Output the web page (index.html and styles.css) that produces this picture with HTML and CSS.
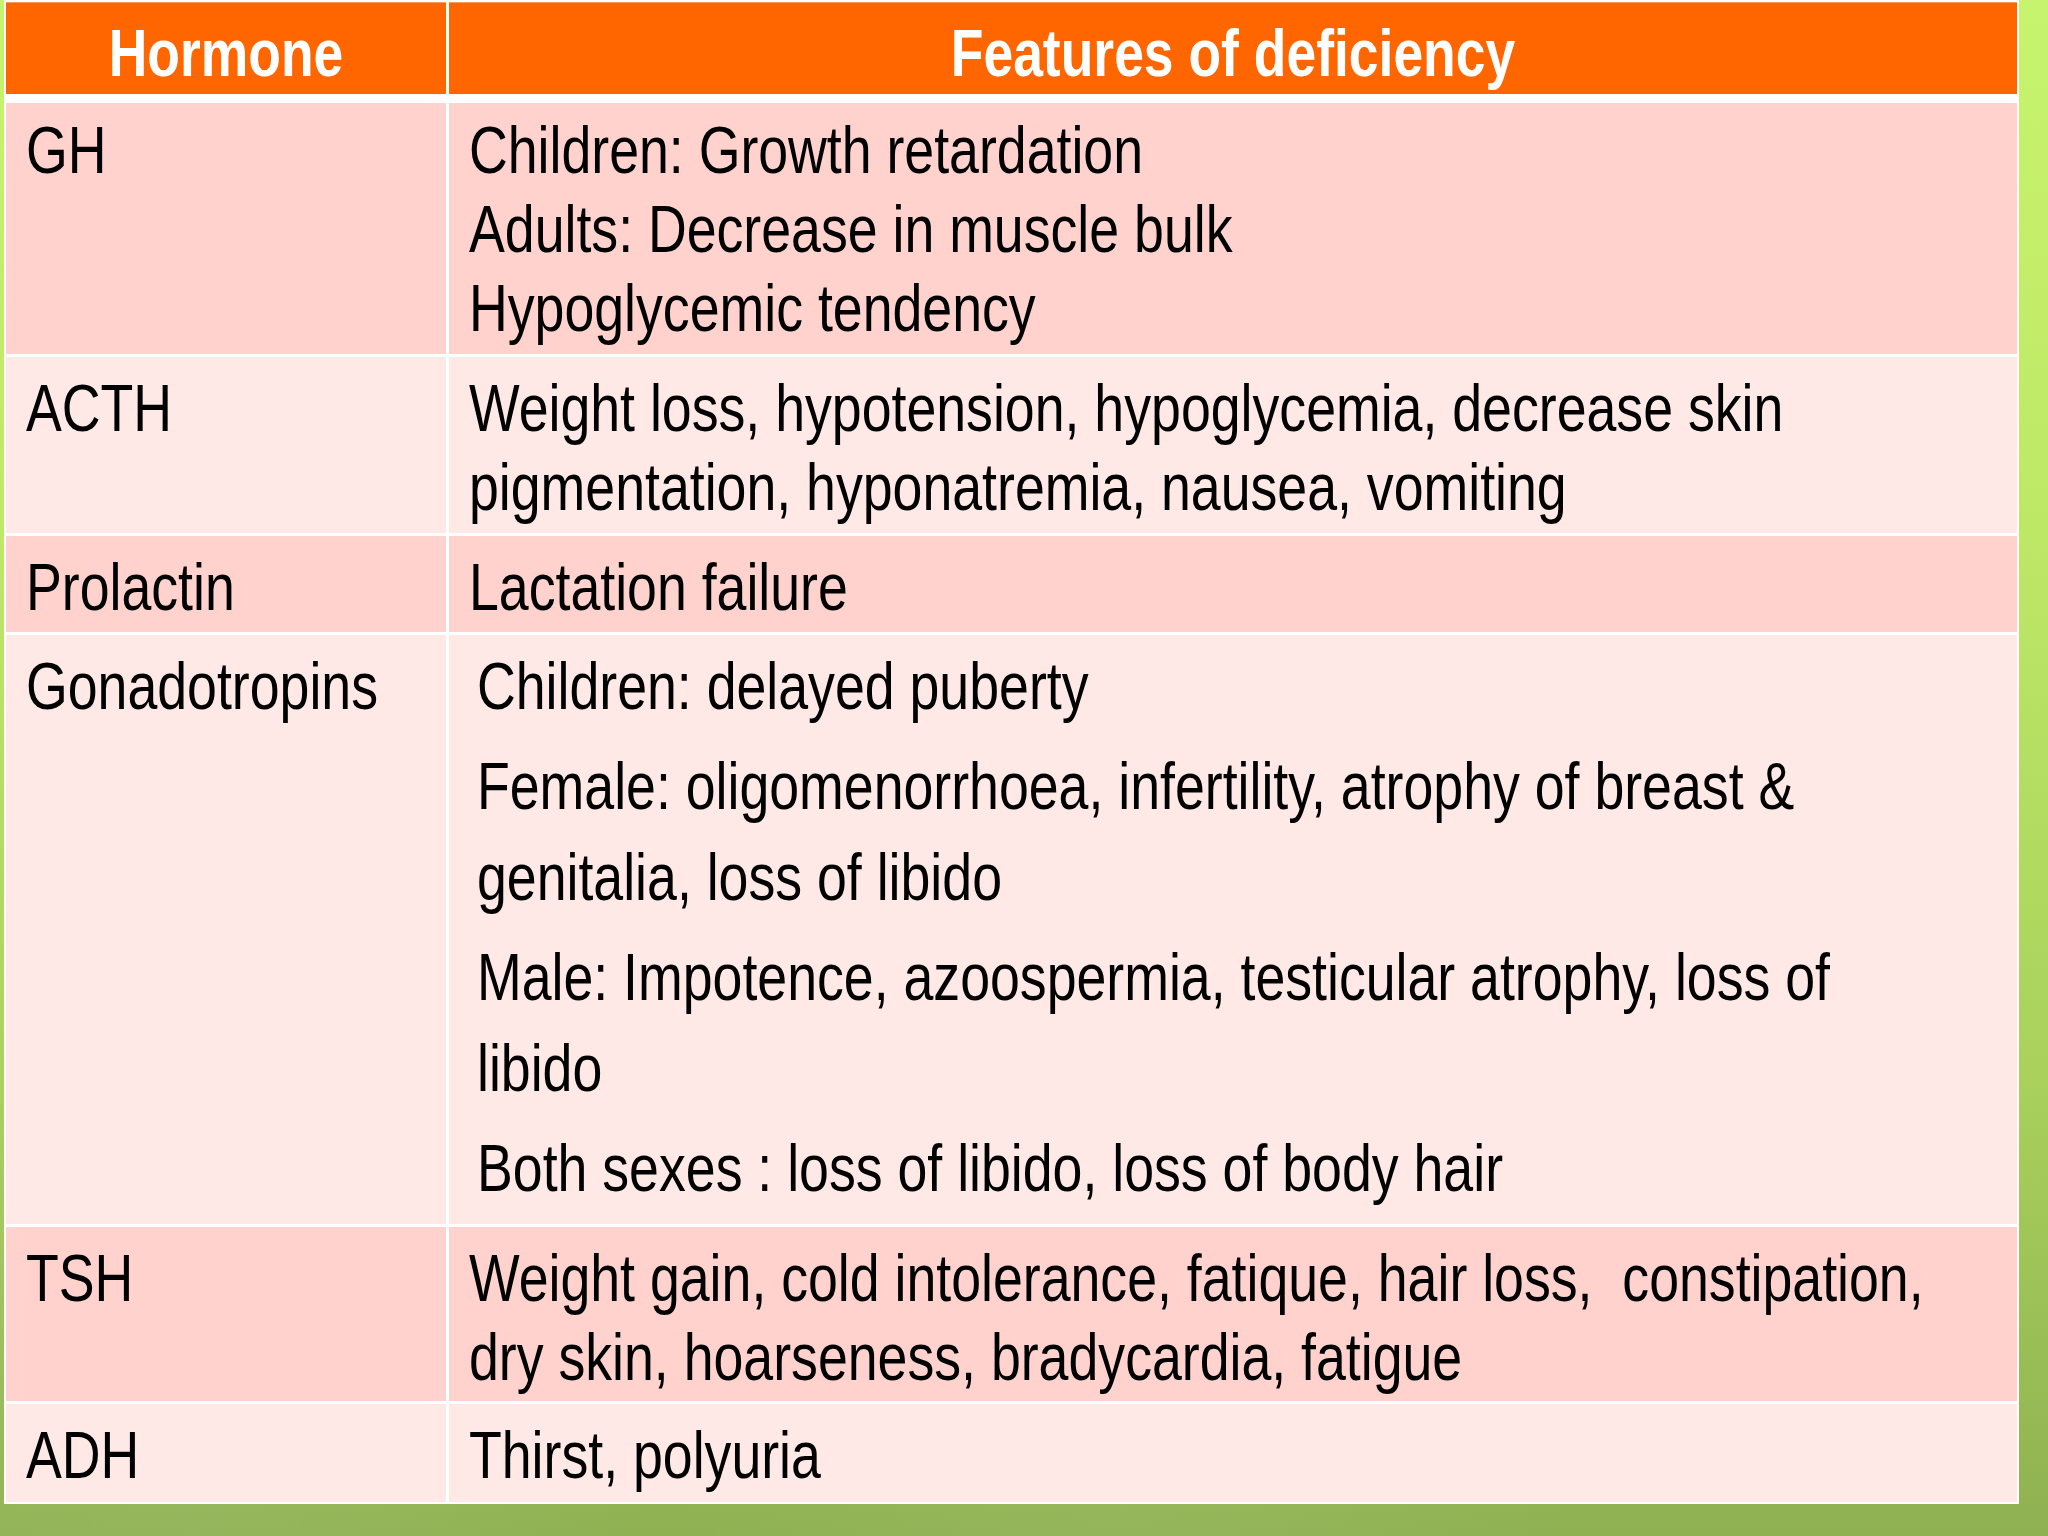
FILE: index.html
```html
<!DOCTYPE html>
<html lang="en">
<head>
<meta charset="utf-8">
<title>Hormone deficiency</title>
<link rel="stylesheet" href="styles.css">
</head>
<body>
<div class="slide">
  <div class="table">
    <div class="row head">
      <div class="cell"><div class="t">Hormone</div></div>
      <div class="cell"><div class="t">Features of deficiency</div></div>
    </div>
    <div class="row dark r-gh">
      <div class="cell"><div class="t">GH</div></div>
      <div class="cell"><div class="t">Children: Growth retardation<br>Adults: Decrease in muscle bulk<br>Hypoglycemic tendency</div></div>
    </div>
    <div class="row light r-acth">
      <div class="cell"><div class="t">ACTH</div></div>
      <div class="cell"><div class="t">Weight loss, hypotension, hypoglycemia, decrease skin<br>pigmentation, hyponatremia, nausea, vomiting</div></div>
    </div>
    <div class="row dark r-prl">
      <div class="cell"><div class="t">Prolactin</div></div>
      <div class="cell"><div class="t">Lactation failure</div></div>
    </div>
    <div class="row light r-gn">
      <div class="cell"><div class="t">Gonadotropins</div></div>
      <div class="cell paras">
        <div class="t">
          <p>Children: delayed puberty</p>
          <p>Female: oligomenorrhoea, infertility, atrophy of breast &amp;<br>genitalia, loss of libido</p>
          <p>Male: Impotence, azoospermia, testicular atrophy, loss of<br>libido</p>
          <p>Both sexes : loss of libido, loss of body hair</p>
        </div>
      </div>
    </div>
    <div class="row dark r-tsh">
      <div class="cell"><div class="t">TSH</div></div>
      <div class="cell"><div class="t">Weight gain, cold intolerance, fatique, hair loss,&nbsp; constipation,<br>dry skin, hoarseness, bradycardia, fatigue</div></div>
    </div>
    <div class="row light r-adh">
      <div class="cell"><div class="t">ADH</div></div>
      <div class="cell"><div class="t">Thirst, polyuria</div></div>
    </div>
  </div>
</div>
</body>
</html>
```

FILE: styles.css
```css
html, body {
  margin: 0;
  padding: 0;
}

body {
  width: 2048px;
  height: 1536px;
  overflow: hidden;
  background:
    linear-gradient(100deg, rgba(255,255,255,0) 0%, rgba(255,255,255,0.06) 20%, rgba(255,255,255,0) 40%, rgba(255,255,255,0.05) 60%, rgba(255,255,255,0) 80%),
    linear-gradient(to bottom, #c7f46e 0%, #bde866 35%, #a9d15c 70%, #8fb152 100%);
  font-family: "Liberation Sans", Arial, sans-serif;
}

.slide {
  padding-left: 4px;
}

.table {
  width: 2015px;
  box-sizing: border-box;
  padding: 2px;
  background: #ffffff;
  display: flex;
  flex-direction: column;
  gap: 3px;
}

.row {
  display: grid;
  grid-template-columns: 440px 1568px;
  column-gap: 3px;
}

.cell {
  box-sizing: border-box;
  padding: 12px 0 0 20px;
  font-size: 66px;
  line-height: 79px;
  color: #000;
  white-space: nowrap;
  overflow: hidden;
}

/* Arial Narrow proportions: condense the regular face horizontally */
.t {
  transform: scaleX(0.813);
  transform-origin: 0 0;
}

.head {
  height: 92px;
  margin-bottom: 6px;
}

.head .cell {
  background: #ff6600;
  color: #fff;
  font-weight: bold;
  text-align: center;
  padding: 12px 0 0 0;
  box-shadow: inset 0 1px 0 #ff9a55;
}

.head .t {
  transform: scaleX(0.81);
  transform-origin: 50% 0;
}

.dark .cell { background: #ffd2cd; }
.light .cell { background: #ffe9e6; }

.r-gh { height: 251px; }
.r-gh .cell { padding-top: 8px; }
.r-acth { height: 176px; }
.r-prl { height: 96px; }
.r-gn { height: 589px; }
.r-tsh { height: 174px; }
.r-adh { height: 98px; }

.paras {
  padding-top: 6px;
  padding-left: 28px;
}

.paras p {
  margin: 0 0 9px 0;
  line-height: 91px;
}
```
